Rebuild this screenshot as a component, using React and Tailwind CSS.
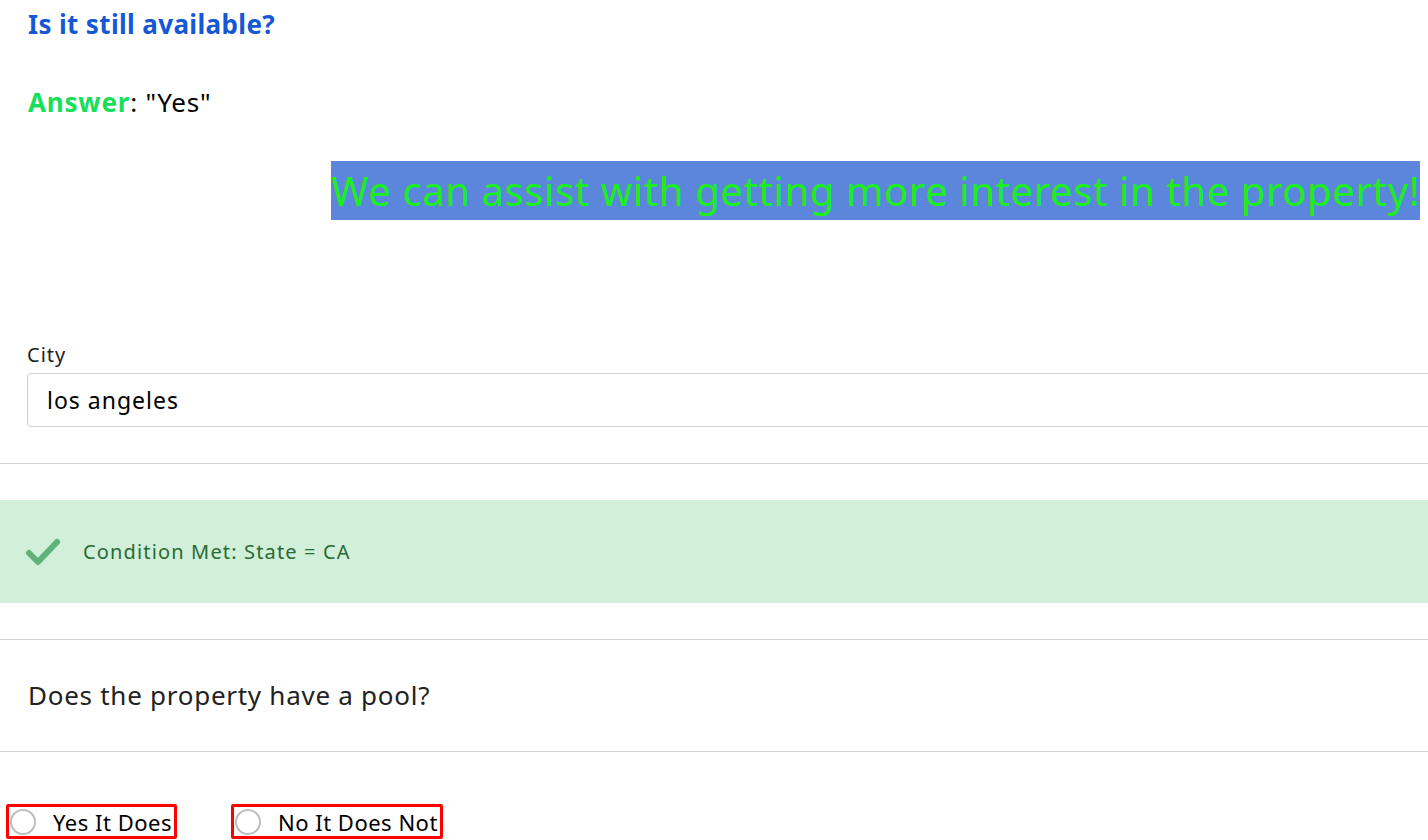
import React, { useState } from "react";

const font = { fontFamily: '"Noto Sans", "Open Sans", sans-serif' };

const Divider = () => <div className="h-px w-full bg-[#d4d4d4]" />;

const RadioOption = ({ label, checked, onClick }) => (
  <label
    className="flex items-center h-[35px] border-[3px] border-[#ff0000] rounded-[2px] pr-[2px] cursor-pointer"
    onClick={onClick}
  >
    <span className="w-[26px] h-[26px] rounded-full border-2 border-[#bdbdbd] flex items-center justify-center ml-[1px]">
      {checked && <span className="w-[12px] h-[12px] rounded-full bg-[#1558d6]" />}
    </span>
    <span className="ml-[17px] text-[22px] tracking-[0.5px] text-black leading-none">{label}</span>
  </label>
);

const App = () => {
  const [city, setCity] = useState("los angeles");
  const [pool, setPool] = useState(null);

  return (
    <div className="w-[1428px] h-[840px] overflow-hidden bg-white" style={font}>
      <div className="pl-[28px] pt-[6px]">
        <h2 className="text-[26px] font-bold tracking-[0.35px] text-[#1558d6] leading-[36px]">
          Is it still available?
        </h2>
        <p className="mt-[42px] text-[26px] tracking-[0.8px] leading-[36px] text-black">
          <span className="font-bold text-[#16e05a]">Answer</span>: "Yes"
        </p>
      </div>

      <div className="flex justify-end pr-[8px] mt-[41px]">
        <span className="bg-[#5b86dc] text-[#1cf01c] text-[40px] tracking-[0.6px] leading-[59px] whitespace-nowrap">
          We can assist with getting more interest in the property!
        </span>
      </div>

      <div className="pl-[27px] mt-[122px]">
        <div className="text-[20px] tracking-[1px] text-[#222] leading-[26px]">City</div>
        <input
          value={city}
          onChange={(e) => setCity(e.target.value)}
          className="mt-[5px] w-[1420px] h-[54px] border border-[#d0d0d0] rounded-[4px] px-[19px] text-[23px] tracking-[1px] text-black outline-none"
          style={font}
        />
      </div>

      <div className="mt-[36px]">
        <Divider />
      </div>

      <div className="mt-[36px] h-[103px] bg-[#d2efd9] flex items-center pl-[25px]">
        <svg width="36" height="30" viewBox="0 0 36 30" className="shrink-0">
          <path
            d="M4 16 L13 25 L32 5"
            fill="none"
            stroke="#5fb27a"
            strokeWidth="6"
            strokeLinecap="round"
            strokeLinejoin="round"
          />
        </svg>
        <span className="ml-[22px] text-[20px] tracking-[1.15px] text-[#276b35]">Condition Met: State = CA</span>
      </div>

      <div className="mt-[36px]">
        <Divider />
      </div>

      <div className="h-[111px] flex items-center pl-[28px]">
        <span className="text-[26px] tracking-[0.73px] text-[#222]">Does the property have a pool?</span>
      </div>

      <Divider />

      <div className="flex items-center gap-[54px] pl-[6px] mt-[52px]">
        <RadioOption label="Yes It Does" checked={pool === "yes"} onClick={() => setPool("yes")} />
        <RadioOption label="No It Does Not" checked={pool === "no"} onClick={() => setPool("no")} />
      </div>
    </div>
  );
};

export default App;
